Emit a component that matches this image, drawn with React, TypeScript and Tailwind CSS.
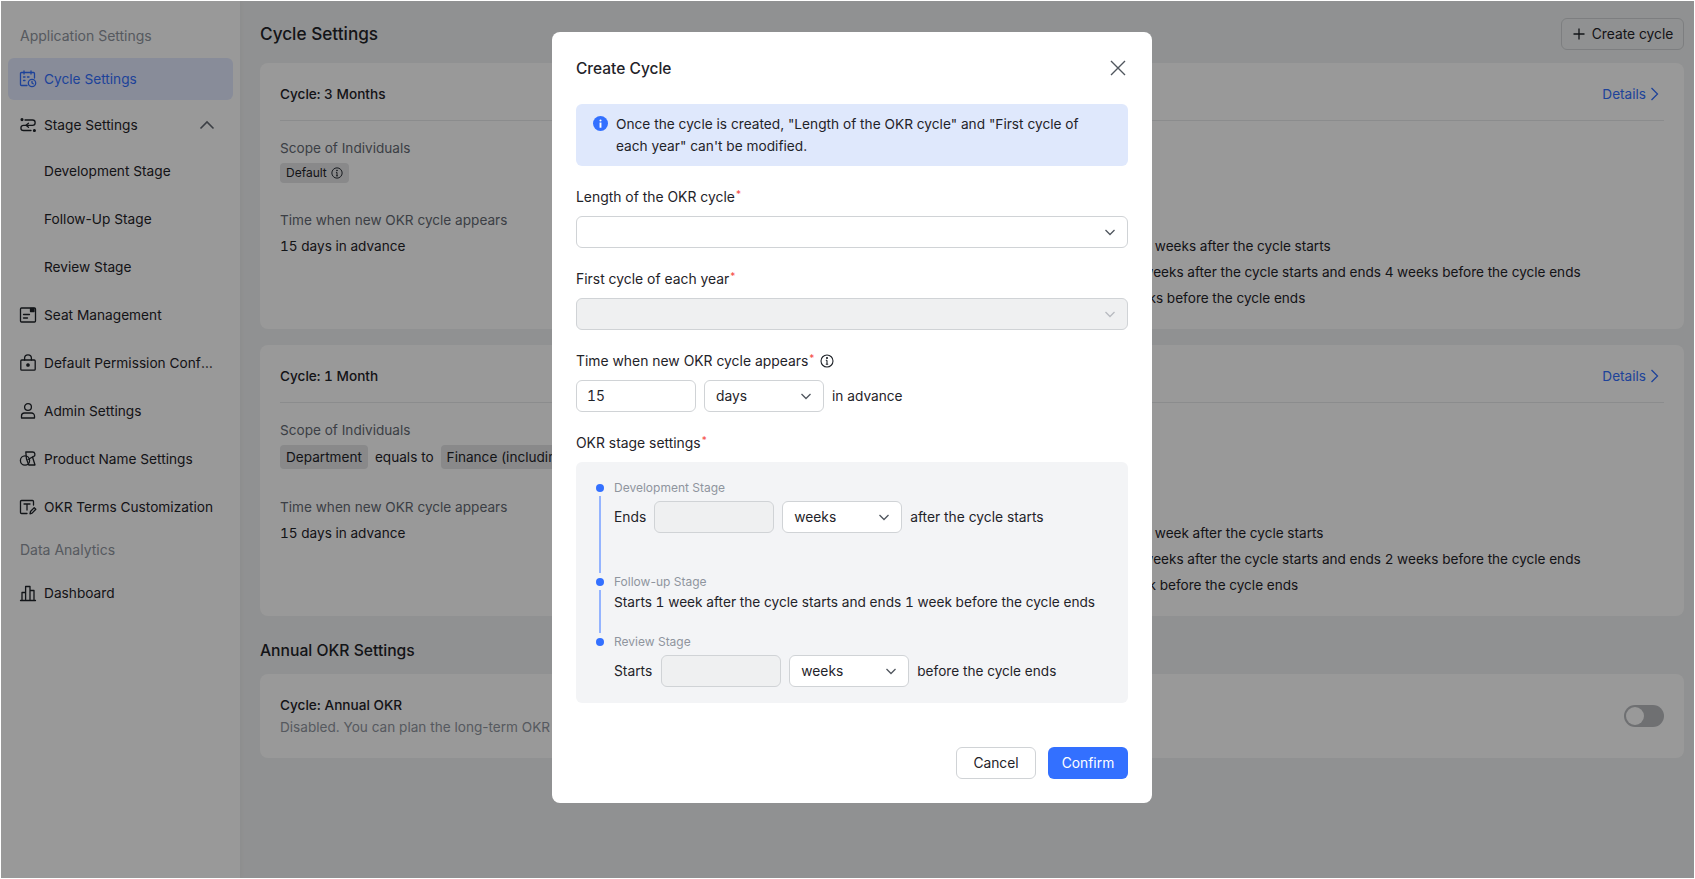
import type { ReactNode } from "react";

const iconProps = {
  width: 18,
  height: 18,
  viewBox: "0 0 18 18",
  fill: "none",
  stroke: "currentColor",
  strokeWidth: 1.3,
  strokeLinecap: "round" as const,
  strokeLinejoin: "round" as const,
};

const CycleIcon = () => (
  <svg {...iconProps}>
    <path d="M8 15.5H2.5a1 1 0 0 1-1-1V3.5a1 1 0 0 1 1-1h12a1 1 0 0 1 1 1V8" />
    <path d="M5 1v3M12 1v3M4.5 7h1.5M8.5 7H10M4.5 10.5h1.5" />
    <circle cx="13" cy="13" r="3.7" />
    <path d="M13 11.3V13l1.2.8" />
  </svg>
);

const StageIcon = () => (
  <svg {...iconProps}>
    <path d="M6 4h7.5a2.2 2.2 0 0 1 0 5.3H4.5a2.3 2.3 0 0 0 0 5.2H12" />
    <path d="M9.5 7.2 7 9.3l2.5 2" />
    <circle cx="3" cy="3.6" r=".9" fill="currentColor" />
    <circle cx="15.4" cy="14.5" r=".9" fill="currentColor" />
  </svg>
);

const SeatIcon = () => (
  <svg {...iconProps}>
    <rect x="1.5" y="2" width="15" height="14" rx="1" />
    <path d="M4.5 8.5h6M4.5 12h4" />
    <path d="M11.5 2.5h3.5v3h-3.5z" fill="currentColor" />
  </svg>
);

const LockIcon = () => (
  <svg {...iconProps}>
    <rect x="1.8" y="6" width="14.4" height="10.2" rx="1" />
    <path d="M5.6 6V4.2a3.4 3.4 0 0 1 6.8 0V6" />
    <circle cx="9" cy="11" r="1.2" fill="currentColor" />
  </svg>
);

const UserIcon = () => (
  <svg {...iconProps}>
    <circle cx="9" cy="5" r="3.4" />
    <path d="M2.5 16v-2a3 3 0 0 1 3-3h7a3 3 0 0 1 3 3v2z" />
  </svg>
);

const ProductIcon = () => (
  <svg {...iconProps}>
    <circle cx="6" cy="10.5" r="4.6" />
    <path d="M7 2h6.5a2.4 2.4 0 0 1 1 4.6l-1 .4 2.5 8H9.8L7.5 9 6.8 2z" />
    <path d="M9 9.5l4.5-2.5" />
  </svg>
);

const TermsIcon = () => (
  <svg {...iconProps}>
    <path d="M8 15.5H2.5a1 1 0 0 1-1-1v-11a1 1 0 0 1 1-1h11a1 1 0 0 1 1 1V7" />
    <path d="M5 6h6M8 6v6" />
    <path d="M11 15.8l.5-2.3 3.7-3.9 1.6 1.6-3.7 3.9z" />
  </svg>
);

const DashboardIcon = () => (
  <svg {...iconProps}>
    <path d="M1.5 16.5h15M3 15.5V8.5h3.6v7M6.6 15.5V2.5h4.4v13M11 15.5V6.5h4v9" />
  </svg>
);

const InfoOutline = ({ size = 12 }: { size?: number }) => (
  <svg width={size} height={size} viewBox="0 0 14 14" fill="none" stroke="currentColor" strokeWidth="1.1">
    <circle cx="7" cy="7" r="6" />
    <path d="M7 6.3v4M5.8 6.3H7M5.8 10.3h2.4" />
    <circle cx="7" cy="4" r=".5" fill="currentColor" />
  </svg>
);

const Chevron = ({ muted }: { muted?: boolean }) => (
  <svg width="12" height="12" viewBox="0 0 12 12" fill="none" stroke={muted ? "#b8bbc0" : "#50565e"} strokeWidth="1.3" className="shrink-0">
    <path d="M1.5 4 6 8.5 10.5 4" />
  </svg>
);

const Star = () => <span className="ml-[1px] self-start text-[10px] leading-[16px] text-[#f54a45]">*</span>;

function Label({ children, extra }: { children: ReactNode; extra?: ReactNode }) {
  return (
    <div className="flex h-[22px] items-center text-[13.9px] text-[#1f2329]">
      {children}
      <Star />
      {extra}
    </div>
  );
}

function Select({ value, className, disabled }: { value?: string; className: string; disabled?: boolean }) {
  return (
    <div
      className={`flex h-8 shrink-0 items-center justify-between rounded-md border pl-[11px] pr-[11px] text-[13.8px] text-[#1f2329] ${
        disabled ? "border-[#d0d3d6] bg-[#eff0f1]" : "border-[#d0d3d6] bg-white"
      } ${className}`}
    >
      <span>{value}</span>
      <Chevron muted={disabled} />
    </div>
  );
}

const NumberBox = ({ value, disabled }: { value?: string; disabled?: boolean }) => (
  <input
    readOnly
    value={value ?? ""}
    className={`h-8 w-[120px] shrink-0 rounded-md border border-[#d0d3d6] px-[10px] text-[13.8px] tabular-nums text-[#1f2329] outline-none ${
      disabled ? "bg-[#eff0f1]" : "bg-white"
    }`}
  />
);

function NavItem({ icon, label, active, right, className = "mb-1.5" }: { icon?: ReactNode; label: string; active?: boolean; right?: ReactNode; className?: string }) {
  return (
    <div
      className={`flex h-[42px] items-center gap-[7px] rounded-md pl-[11px] pr-3 text-[13.7px] ${
        active ? "bg-[#e3e9ff] text-[#3370ff]" : "text-[#1f2329]"
      } ${className}`}
    >
      <span className="flex w-[18px] shrink-0 justify-center">{icon}</span>
      <span className="w-[172px] truncate">{label}</span>
      {right}
    </div>
  );
}

function Sidebar() {
  return (
    <aside className="w-[239px] shrink-0 bg-white px-[7px] pt-6 shadow-[1px_0_4px_rgba(0,0,0,0.04)]">
      <div className="mb-[11px] h-[22px] pl-3 text-sm leading-[22px] text-[#8f959e]">Application Settings</div>
      <NavItem icon={<CycleIcon />} label="Cycle Settings" active className="mb-1" />
      <NavItem
        icon={<StageIcon />}
        label="Stage Settings"
        className="mb-1"
        right={
          <svg width="16" height="10" viewBox="0 0 16 10" fill="none" stroke="#646a73" strokeWidth="1.6" className="-ml-[24px] shrink-0">
            <path d="M1.5 8.5 8 2l6.5 6.5" />
          </svg>
        }
      />
      <NavItem label="Development Stage" />
      <NavItem label="Follow-Up Stage" />
      <NavItem label="Review Stage" />
      <NavItem icon={<SeatIcon />} label="Seat Management" />
      <NavItem icon={<LockIcon />} label="Default Permission Configuration" />
      <NavItem icon={<UserIcon />} label="Admin Settings" />
      <NavItem icon={<ProductIcon />} label="Product Name Settings" />
      <NavItem icon={<TermsIcon />} label="OKR Terms Customization" className="mb-[11px]" />
      <div className="mb-[11px] h-[22px] pl-3 text-sm leading-[22px] text-[#8f959e]">Data Analytics</div>
      <NavItem icon={<DashboardIcon />} label="Dashboard" />
    </aside>
  );
}

const Tag = ({ children }: { children: ReactNode }) => (
  <span className="inline-flex h-6 items-center rounded bg-[#e4e5e7] px-[6px] text-[13.6px] text-[#1f2329]">{children}</span>
);

function CycleCard({ title, scope, gap, lines }: { title: string; scope: ReactNode; gap: string; lines: string[] }) {
  return (
    <section className="rounded-lg bg-white px-5 pb-5">
      <div className="flex items-center justify-between border-b border-[#e8e9eb] pb-[15px] pt-5 text-[13.6px] leading-[22px]">
        <span className="font-medium tabular-nums text-[#1f2329]">{title}</span>
        <span className="mr-[2px] flex items-center text-[#3370ff]">
          Details
          <svg width="16" height="16" viewBox="0 0 16 16" fill="none" stroke="currentColor" strokeWidth="1.3">
            <path d="M5.5 2l6 6-6 6" />
          </svg>
        </span>
      </div>
      <div className="pt-4 text-[13.6px] leading-[22px]">
        <div className="text-[#646a73]">Scope of Individuals</div>
        <div className="mt-1 flex">{scope}</div>
        <div className={`flex ${gap}`}>
          <div className="w-[694px] shrink-0">
            <div className="text-[#646a73]">Time when new OKR cycle appears</div>
            <div className="mt-1 tabular-nums text-[#1f2329]">15 days in advance</div>
          </div>
          <div className="flex-1">
            <div className="text-[#646a73]">OKR stage settings</div>
            <div className="mt-1 flex flex-col gap-1 tabular-nums text-[#1f2329]">
              {lines.map((line) => (
                <div key={line}>{line}</div>
              ))}
            </div>
          </div>
        </div>
      </div>
    </section>
  );
}

function Page() {
  return (
    <div className="flex h-full bg-[#f1f2f3]">
      <Sidebar />
      <main className="min-w-0 flex-1 pl-5 pr-[10px] pt-[17px]">
        <div className="mb-[13px] flex h-8 items-center justify-between">
          <h1 className="text-[17.2px] font-medium text-[#1f2329]">Cycle Settings</h1>
          <button className="flex h-8 w-[123px] items-center justify-center gap-[6px] rounded-md border border-[#d0d3d6] text-[13.8px] text-[#1f2329]">
            <svg width="14" height="14" viewBox="0 0 14 14" fill="none" stroke="currentColor" strokeWidth="1.3">
              <path d="M7 1.5v11M1.5 7h11" />
            </svg>
            Create cycle
          </button>
        </div>
        <div className="flex flex-col gap-4">
          <CycleCard
            title="Cycle: 3 Months"
            gap="mt-[26px]"
            scope={
              <span className="inline-flex h-5 items-center gap-1 rounded bg-[#e4e5e7] px-[6px] text-xs text-[#1f2329]">
                Default
                <InfoOutline />
              </span>
            }
            lines={[
              "Development Stage: Ends 2 weeks after the cycle starts",
              "Follow-up Stage: Starts 2 weeks after the cycle starts and ends 4 weeks before the cycle ends",
              "Review Stage: Starts 4 weeks before the cycle ends",
            ]}
          />
          <CycleCard
            title="Cycle: 1 Month"
            gap="mt-[27px]"
            scope={
              <div className="flex items-center gap-[7px] text-[#1f2329]">
                <Tag>Department</Tag>
                equals to
                <Tag>Finance (including sub-departments)</Tag>
              </div>
            }
            lines={[
              "Development Stage: Ends 1 week after the cycle starts",
              "Follow-up Stage: Starts 2 weeks after the cycle starts and ends 2 weeks before the cycle ends",
              "Review Stage: Starts 1 week before the cycle ends",
            ]}
          />
        </div>
        <h2 className="mb-[11px] mt-[23px] h-6 text-[15.7px] font-medium leading-6 text-[#1f2329]">Annual OKR Settings</h2>
        <section className="flex items-center justify-between rounded-lg bg-white p-5 text-[13.6px] leading-[22px]">
          <div>
            <div className="font-medium text-[#1f2329]">Cycle: Annual OKR</div>
            <div className="text-[#8f959e]">Disabled. You can plan the long-term OKR goals of the company here.</div>
          </div>
          <span className="flex h-[22px] w-10 items-center rounded-full bg-[#b9bbbf] p-[2px]">
            <span className="h-[18px] w-[18px] rounded-full bg-white" />
          </span>
        </section>
      </main>
    </div>
  );
}

function StageDot({ line }: { line?: boolean }) {
  return (
    <div className="flex w-2 shrink-0 flex-col items-center">
      <div className="mt-[5px] h-2 w-2 shrink-0 rounded-full bg-[#3370ff]" />
      {line && <div className="mt-1 w-[2px] flex-1 bg-[#94b4ff]" />}
    </div>
  );
}

function StagePanel() {
  return (
    <div className="mt-2 rounded-md bg-[#f3f4f6] pb-4 pl-5 pr-4 pt-[17px] text-[13.8px] text-[#1f2329]">
      <div className="flex gap-[10px]">
        <StageDot line />
        <div className="pb-10">
          <div className="h-[18px] text-xs leading-[18px] text-[#8f959e]">Development Stage</div>
          <div className="mt-1 flex items-center gap-2">
            Ends
            <NumberBox disabled />
            <Select value="weeks" className="w-[120px]" />
            after the cycle starts
          </div>
        </div>
      </div>
      <div className="flex gap-[10px]">
        <StageDot line />
        <div className="pb-5">
          <div className="h-[18px] text-xs leading-[18px] text-[#8f959e]">Follow-up Stage</div>
          <div className="text-[13.7px] leading-[22px] tabular-nums">Starts 1 week after the cycle starts and ends 1 week before the cycle ends</div>
        </div>
      </div>
      <div className="flex gap-[10px]">
        <StageDot />
        <div>
          <div className="h-[18px] text-xs leading-[18px] text-[#8f959e]">Review Stage</div>
          <div className="mt-1 flex items-center gap-2">
            <span className="mr-px">Starts</span>
            <NumberBox disabled />
            <Select value="weeks" className="w-[120px]" />
            <span className="text-[13.6px]">before the cycle ends</span>
          </div>
        </div>
      </div>
    </div>
  );
}

function Modal() {
  return (
    <div className="absolute left-[551px] top-[31px] w-[600px] rounded-lg bg-white px-6 pb-6 pt-6">
      <div className="flex h-6 items-center justify-between">
        <h2 className="mt-px text-[15.5px] font-medium text-[#1f2329]">Create Cycle</h2>
        <svg width="18" height="18" viewBox="0 0 18 18" fill="none" stroke="#50565e" strokeWidth="1.4" className="mr-px">
          <path d="M2 2l14 14M16 2 2 16" />
        </svg>
      </div>
      <div className="mt-6 flex gap-2 rounded-md bg-[#dfe8fc] py-[9px] pl-[17px] pr-6 text-[13.7px] leading-[22px] text-[#1f2329]">
        <svg width="15" height="15" viewBox="0 0 16 16" className="mt-[3px] shrink-0">
          <circle cx="8" cy="8" r="8" fill="#3370ff" />
          <rect x="7" y="7" width="2" height="5.5" fill="#fff" />
          <circle cx="8" cy="4.7" r="1.1" fill="#fff" />
        </svg>
        <span>Once the cycle is created, "Length of the OKR cycle" and "First cycle of each year" can't be modified.</span>
      </div>

      <div className="mt-5">
        <Label>Length of the OKR cycle</Label>
        <Select className="mt-2 w-full" />
      </div>
      <div className="mt-5">
        <Label>First cycle of each year</Label>
        <Select className="mt-2 w-full" disabled />
      </div>
      <div className="mt-5">
        <Label
          extra={
            <span className="ml-[6px] text-[#1f2329]">
              <InfoOutline size={14} />
            </span>
          }
        >
          Time when new OKR cycle appears
        </Label>
        <div className="mt-2 flex items-center gap-2 text-[13.7px] text-[#1f2329]">
          <NumberBox value="15" />
          <Select value="days" className="w-[120px]" />
          in advance
        </div>
      </div>
      <div className="mt-5">
        <Label>OKR stage settings</Label>
        <StagePanel />
      </div>

      <div className="mt-11 flex justify-end gap-3">
        <button className="h-8 w-20 rounded-md border border-[#d0d3d6] bg-white text-[13.8px] text-[#1f2329]">Cancel</button>
        <button className="h-8 w-20 rounded-md bg-[#3370ff] text-[13.8px] text-white">Confirm</button>
      </div>
    </div>
  );
}

export default function App() {
  return (
    <div className="h-screen w-full overflow-hidden bg-white p-px font-[Inter,sans-serif]">
      <div className="relative h-full overflow-hidden">
        <Page />
        <div className="absolute inset-0 bg-black/40" />
        <Modal />
      </div>
    </div>
  );
}
